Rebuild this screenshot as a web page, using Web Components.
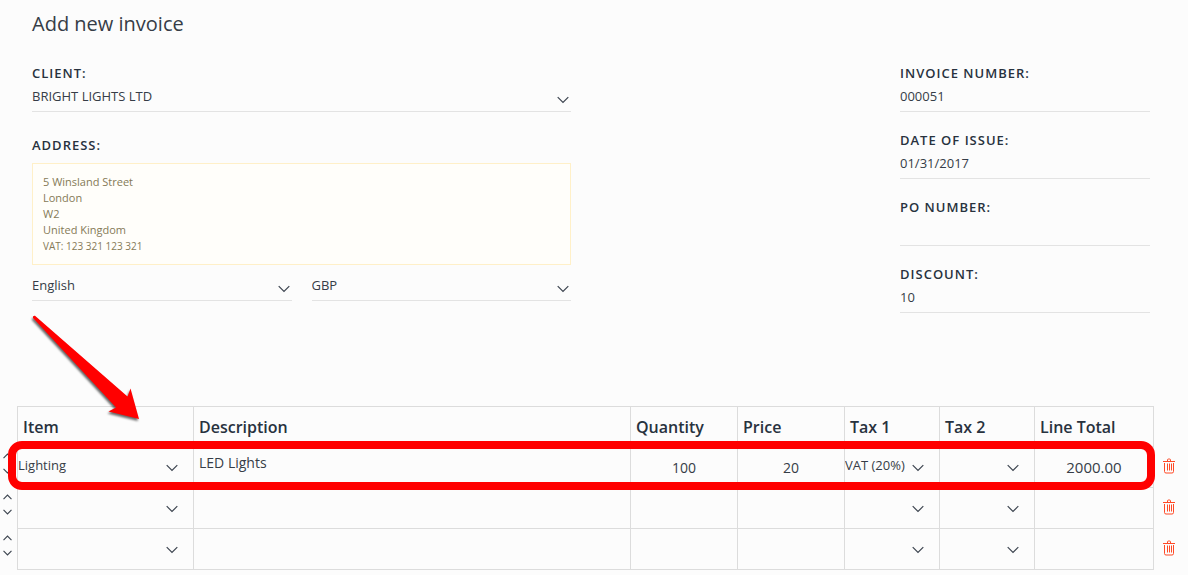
<!DOCTYPE html>
<html lang="en">
<head>
<meta charset="utf-8">
<title>Add new invoice</title>
<style>
  :root {
    --page: #fcfcfc;
    --ink: #28323e;
    --text: #363d47;
    --line: #e3e3e3;
    --grid: #dcdcdc;
    --danger: #ff4a26;
    --mark: #ff0000;
  }
  body {
    margin: 0;
    background: var(--page);
    color: var(--text);
    font-family: "Open Sans", "Noto Sans", sans-serif;
    font-size: 13px;
  }
</style>
</head>
<body>
<invoice-page>
  <h1 slot="title">Add new invoice</h1>

  <invoice-select slot="client" label="Client:" options="BRIGHT LIGHTS LTD"></invoice-select>
  <address-card slot="client" label="Address:">
    <span>5 Winsland Street</span>
    <span>London</span>
    <span>W2</span>
    <span>United Kingdom</span>
    <small>VAT: 123 321 123 321</small>
  </address-card>
  <invoice-select slot="locale" name="Language" options="English"></invoice-select>
  <invoice-select slot="locale" name="Currency" options="GBP"></invoice-select>

  <invoice-field slot="meta" label="Invoice number:" value="000051"></invoice-field>
  <invoice-field slot="meta" label="Date of issue:" value="01/31/2017"></invoice-field>
  <invoice-field slot="meta" label="PO number:" value=""></invoice-field>
  <invoice-field slot="meta" label="Discount:" value="10"></invoice-field>

  <line-items slot="lines"></line-items>
</invoice-page>

<script>
const LABEL_CSS = `
  .label {
    display: block;
    color: var(--ink);
    font-size: 13px;
    font-weight: 600;
    line-height: 20px;
    letter-spacing: 1px;
    text-transform: uppercase;
  }
`;

class UiChevron extends HTMLElement {
  connectedCallback() {
    const up = this.hasAttribute('up');
    const small = this.hasAttribute('small');
    this.attachShadow({ mode: 'open' });
    this.shadowRoot.innerHTML = `
      <style>
        :host { display: block; pointer-events: none; }
        svg { display: block; fill: none; stroke: #3c444f; stroke-width: ${small ? 1.5 : 1.2}; }
      </style>
      <svg width="${small ? 9 : 12}" height="${small ? 6 : 8}" viewBox="0 0 12 8" aria-hidden="true">
        <path d="${up ? 'M.7 6.7 6 1.4l5.3 5.3' : 'M.7 1.2 6 6.5l5.3-5.3'}"/>
      </svg>
    `;
  }
}
customElements.define('ui-chevron', UiChevron);

class InvoiceField extends HTMLElement {
  connectedCallback() {
    this.attachShadow({ mode: 'open' });
    this.shadowRoot.innerHTML = `
      <style>
        :host { display: block; }
        ${LABEL_CSS}
        input {
          display: block;
          box-sizing: border-box;
          width: 100%;
          height: 29px;
          padding: 0 0 2px;
          border: 0;
          border-bottom: 1px solid var(--line);
          background: none;
          color: inherit;
          font: inherit;
        }
      </style>
      <label class="label" for="f">${this.getAttribute('label')}</label>
      <input id="f" type="text" value="${this.getAttribute('value')}">
    `;
  }
}
customElements.define('invoice-field', InvoiceField);

class InvoiceSelect extends HTMLElement {
  connectedCallback() {
    const label = this.getAttribute('label');
    const options = this.getAttribute('options').split('|');
    this.attachShadow({ mode: 'open' });
    this.shadowRoot.innerHTML = `
      <style>
        :host { display: block; min-width: 0; }
        ${LABEL_CSS}
        .box {
          display: grid;
          align-items: center;
          border-bottom: 1px solid var(--line);
        }
        select, ui-chevron { grid-area: 1 / 1; }
        select {
          appearance: none;
          width: 100%;
          height: 28px;
          padding: 0 0 2px;
          border: 0;
          background: none;
          color: inherit;
          font: inherit;
        }
        ui-chevron { justify-self: end; padding: 6px 2px 0 0; }
        :host([cell]) .box { border: 0; }
        :host([cell]) select { height: 32px; padding-bottom: 4px; }
        :host([cell]) ui-chevron { padding: 2px 15px 0 0; }
      </style>
      ${label ? `<label class="label" for="s">${label}</label>` : ''}
      <div class="box">
        <select id="s" ${label ? '' : `aria-label="${this.getAttribute('name')}"`}>
          ${options.map(o => `<option>${o}</option>`).join('')}
        </select>
        <ui-chevron></ui-chevron>
      </div>
    `;
  }
}
customElements.define('invoice-select', InvoiceSelect);

class AddressCard extends HTMLElement {
  connectedCallback() {
    this.attachShadow({ mode: 'open' });
    this.shadowRoot.innerHTML = `
      <style>
        :host { display: block; }
        ${LABEL_CSS}
        .card {
          display: flex;
          flex-direction: column;
          margin-top: 8px;
          padding: 10px;
          border: 1px solid #fff0c8;
          background: #fffefa;
          color: #857a57;
          font-size: 11px;
          line-height: 16px;
        }
        ::slotted(small) { font-size: 10px; }
      </style>
      <span class="label">${this.getAttribute('label')}</span>
      <div class="card"><slot></slot></div>
    `;
  }
}
customElements.define('address-card', AddressCard);

class CalloutArrow extends HTMLElement {
  connectedCallback() {
    this.attachShadow({ mode: 'open' });
    this.shadowRoot.innerHTML = `
      <style>
        :host { display: block; pointer-events: none; }
        svg {
          display: block;
          overflow: visible;
          fill: var(--mark);
          filter: drop-shadow(-1px 2px 1px rgba(0, 0, 0, .6));
        }
      </style>
      <svg width="108" height="106" viewBox="0 0 108 106" aria-hidden="true">
        <path d="M3 .8 95.5 81.5 98.5 73.5 107 104 76.500 96.500 84 92.500 1 3Q.4 .4 3 .8Z"/>
      </svg>
    `;
  }
}
customElements.define('callout-arrow', CalloutArrow);

class LineItems extends HTMLElement {
  row({ item, description, quantity, price, tax1, tax2, total }) {
    return `
      <tr>
        <td class="move">
          <button type="button" aria-label="Move up"><ui-chevron small up></ui-chevron></button>
          <button type="button" aria-label="Move down"><ui-chevron small></ui-chevron></button>
        </td>
        <td class="first"><invoice-select cell name="Item" options="${item}"></invoice-select></td>
        <td><input class="desc" aria-label="Description" value="${description}"></td>
        <td><input class="num" aria-label="Quantity" value="${quantity}"></td>
        <td><input class="num" aria-label="Price" value="${price}"></td>
        <td><invoice-select cell name="Tax 1" options="${tax1}"></invoice-select></td>
        <td><invoice-select cell name="Tax 2" options="${tax2}"></invoice-select></td>
        <td class="total">${total}</td>
        <td class="remove">
          <button type="button" aria-label="Delete line">
            <svg width="12" height="16" viewBox="0 0 12 16" aria-hidden="true">
              <path d="M0 3.500h12M4.500 3.500V2q0-1 1-1h1q1 0 1 1v1.500M1.500 5v8.500q0 1.500 1.500 1.500h6q1.500 0 1.500-1.500V5M4.500 5.500v7M6.500 5.500v7M8.500 5.500v7"/>
            </svg>
          </button>
        </td>
      </tr>
    `;
  }

  connectedCallback() {
    const blank = { item: '', description: '', quantity: '', price: '', tax1: '', tax2: '', total: '' };
    const lines = [
      { item: 'Lighting', description: 'LED Lights', quantity: '100', price: '20', tax1: 'VAT (20%)', tax2: '', total: '2000.00' },
      blank,
      blank
    ];
    this.attachShadow({ mode: 'open' });
    this.shadowRoot.innerHTML = `
      <style>
        :host { display: block; position: relative; }
        table {
          width: 100%;
          table-layout: fixed;
          border-collapse: separate;
          border-spacing: 0;
        }
        .c-move { width: 17px; }
        .c-item { width: 177px; }
        .c-num { width: 107px; }
        .c-tax { width: 95px; }
        .c-total { width: 119px; }
        .c-remove { width: 34px; }
        th, td {
          box-sizing: border-box;
          height: 41px;
          padding: 0;
          border: 0 solid var(--grid);
          border-width: 0 1px 1px 0;
        }
        th {
          border-top-width: 1px;
          padding-left: 5px;
          color: var(--ink);
          font-size: 16px;
          font-weight: 600;
          text-align: left;
        }
        .first { border-left-width: 1px; }
        .move, .remove { border: 0; }
        input {
          display: block;
          box-sizing: border-box;
          width: 100%;
          height: 32px;
          border: 0;
          background: none;
          color: inherit;
          font: inherit;
          font-size: 14px;
        }
        .desc { padding: 0 5px 10px; }
        .num { padding: 0; text-align: center; }
        .total { font-size: 15px; text-align: center; }
        button {
          display: block;
          padding: 0;
          border: 0;
          background: none;
        }
        .move button { height: 15px; padding-left: 3px; }
        .move { padding-bottom: 9px; }
        .remove { padding-bottom: 3px; }
        .remove button { padding-left: 9px; }
        .remove svg { display: block; fill: none; stroke: var(--danger); }
        .highlight {
          position: absolute;
          top: 35px;
          left: 8px;
          right: 33px;
          height: 49px;
          box-sizing: border-box;
          border: 8px solid var(--mark);
          border-radius: 14px;
          pointer-events: none;
        }
        callout-arrow { position: absolute; top: -91px; left: 32px; }
      </style>
      <table>
        <colgroup>
          <col class="c-move"><col class="c-item"><col><col class="c-num"><col class="c-num">
          <col class="c-tax"><col class="c-tax"><col class="c-total"><col class="c-remove">
        </colgroup>
        <thead>
          <tr>
            <td class="move"></td>
            <th class="first">Item</th>
            <th>Description</th>
            <th>Quantity</th>
            <th>Price</th>
            <th>Tax 1</th>
            <th>Tax 2</th>
            <th>Line Total</th>
            <td class="remove"></td>
          </tr>
        </thead>
        <tbody>${lines.map(line => this.row(line)).join('')}</tbody>
      </table>
      <div class="highlight"></div>
      <callout-arrow></callout-arrow>
    `;
  }
}
customElements.define('line-items', LineItems);

class InvoicePage extends HTMLElement {
  connectedCallback() {
    this.attachShadow({ mode: 'open' });
    this.shadowRoot.innerHTML = `
      <style>
        :host { display: block; padding: 10px 0 5px; }
        ::slotted(h1) {
          margin: 0 32px 25px;
          font-size: 20px;
          font-weight: 400;
          line-height: 28px;
        }
        .head {
          display: grid;
          grid-template-columns: minmax(0, 539px) 250px;
          justify-content: space-between;
          align-items: start;
          gap: 20px;
          margin: 0 38px 93px 32px;
        }
        .client { display: flex; flex-direction: column; gap: 23px; }
        .locale {
          display: grid;
          grid-template-columns: 1fr 1fr;
          gap: 20px;
          margin-top: 7px;
        }
        .meta { display: flex; flex-direction: column; gap: 18px; }
      </style>
      <slot name="title"></slot>
      <div class="head">
        <div>
          <div class="client"><slot name="client"></slot></div>
          <div class="locale"><slot name="locale"></slot></div>
        </div>
        <div class="meta"><slot name="meta"></slot></div>
      </div>
      <slot name="lines"></slot>
    `;
  }
}
customElements.define('invoice-page', InvoicePage);
</script>
</body>
</html>
